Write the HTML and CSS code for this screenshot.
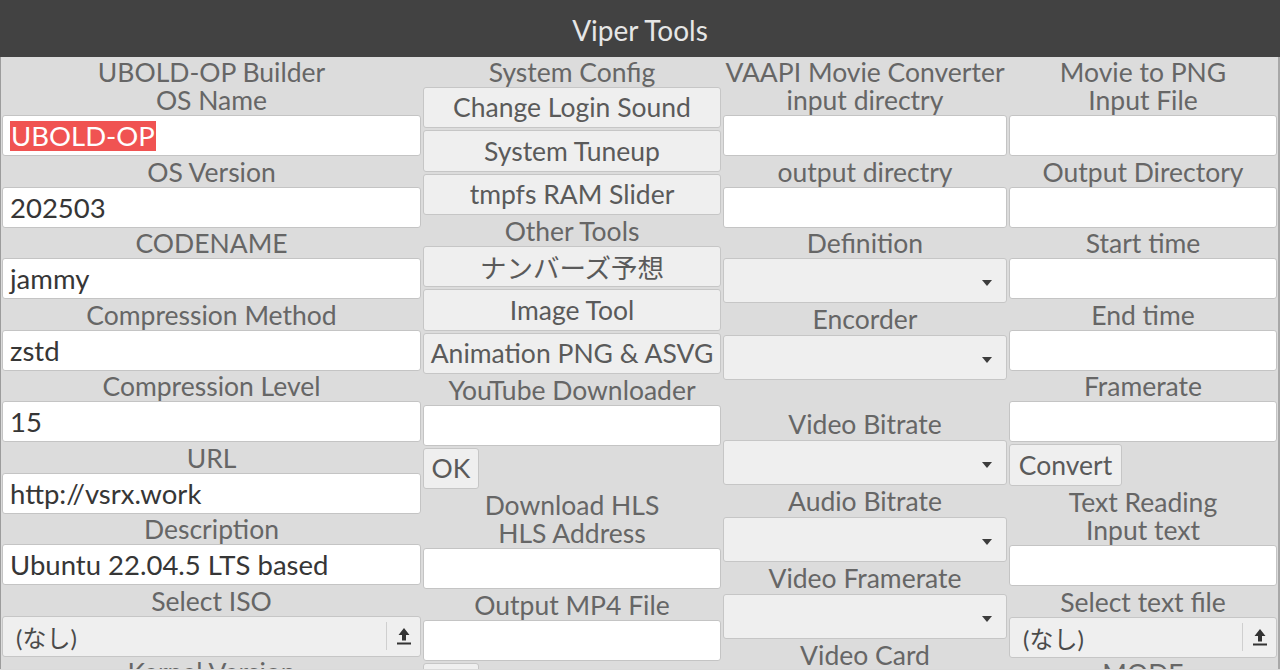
FILE: index.html
```html
<!DOCTYPE html>
<html lang="ja">
<head>
<meta charset="utf-8">
<title>Viper Tools</title>
<link rel="stylesheet" href="styles.css">
</head>
<body>
<div class="window">
  <div class="titlebar">Viper Tools</div>
  <div class="content">
    <div class="col c1">
      <div class="label">UBOLD-OP Builder</div>
      <div class="label">OS Name</div>
      <div class="entry"><span class="sel">UBOLD-OP</span></div>
      <div class="label">OS Version</div>
      <div class="entry">202503</div>
      <div class="label">CODENAME</div>
      <div class="entry">jammy</div>
      <div class="label">Compression Method</div>
      <div class="entry">zstd</div>
      <div class="label">Compression Level</div>
      <div class="entry">15</div>
      <div class="label">URL</div>
      <div class="entry">http://vsrx.work</div>
      <div class="label">Description</div>
      <div class="entry">Ubuntu 22.04.5 LTS based</div>
      <div class="label">Select ISO</div>
      <div class="file">
        <span class="file-name">(なし)</span>
        <span class="file-icon"><svg width="14" height="18" viewBox="0 0 14 18"><path d="M7 1 L12.5 8 H9 V13.5 H5 V8 H1.5 Z" fill="#333"/><rect x="0" y="15.5" width="14" height="2" fill="#333"/></svg></span>
      </div>
      <div class="label">Kernel Version</div>
    </div>
    <div class="col c2">
      <div class="label">System Config</div>
      <div class="btn">Change Login Sound</div>
      <div class="btn">System Tuneup</div>
      <div class="btn">tmpfs RAM Slider</div>
      <div class="label">Other Tools</div>
      <div class="btn">ナンバーズ予想</div>
      <div class="btn">Image Tool</div>
      <div class="btn">Animation PNG &amp; ASVG</div>
      <div class="label">YouTube Downloader</div>
      <div class="entry"></div>
      <div class="btn small">OK</div>
      <div class="label">Download HLS</div>
      <div class="label">HLS Address</div>
      <div class="entry"></div>
      <div class="label">Output MP4 File</div>
      <div class="entry"></div>
      <div class="btn small"></div>
    </div>
    <div class="col c3">
      <div class="label">VAAPI Movie Converter</div>
      <div class="label">input directry</div>
      <div class="entry"></div>
      <div class="label">output directry</div>
      <div class="entry"></div>
      <div class="label">Definition</div>
      <div class="combo"><span class="arrow"></span></div>
      <div class="label tall">Encorder</div>
      <div class="combo"><span class="arrow"></span></div>
      <div class="spacer"></div>
      <div class="label tall">Video Bitrate</div>
      <div class="combo"><span class="arrow"></span></div>
      <div class="label tall">Audio Bitrate</div>
      <div class="combo"><span class="arrow"></span></div>
      <div class="label tall">Video Framerate</div>
      <div class="combo"><span class="arrow"></span></div>
      <div class="label tall">Video Card</div>
      <div class="combo"><span class="arrow"></span></div>
    </div>
    <div class="col c4">
      <div class="label">Movie to PNG</div>
      <div class="label">Input File</div>
      <div class="entry"></div>
      <div class="label">Output Directory</div>
      <div class="entry"></div>
      <div class="label">Start time</div>
      <div class="entry"></div>
      <div class="label">End time</div>
      <div class="entry"></div>
      <div class="label">Framerate</div>
      <div class="entry"></div>
      <div class="btn small convert">Convert</div>
      <div class="label">Text Reading</div>
      <div class="label">Input text</div>
      <div class="entry"></div>
      <div class="label">Select text file</div>
      <div class="file">
        <span class="file-name">(なし)</span>
        <span class="file-icon"><svg width="14" height="18" viewBox="0 0 14 18"><path d="M7 1 L12.5 8 H9 V13.5 H5 V8 H1.5 Z" fill="#333"/><rect x="0" y="15.5" width="14" height="2" fill="#333"/></svg></span>
      </div>
      <div class="label">MODE</div>
    </div>
  </div>
</div>
</body>
</html>
```
FILE: styles.css
```css
* { box-sizing: border-box; }
html, body {
  margin: 0;
  padding: 0;
  width: 1280px;
  height: 670px;
  overflow: hidden;
  background: #dadada;
  font-family: Lato, "Noto Sans CJK JP", "Noto Sans", sans-serif;
}
.window {
  width: 1280px;
  height: 670px;
  overflow: hidden;
  background: #dadada;
}
.titlebar {
  height: 58px;
  background: #424242;
  color: #e6e6e6;
  font-size: 28px;
  line-height: 60px;
  text-align: center;
  border-bottom: 1px solid #6a6a6a;
}
.content {
  display: flex;
  align-items: flex-start;
  height: 612px;
  overflow: hidden;
  border-left: 1px solid #9c9c9c;
  border-right: 2px solid #a8a8a8;
  background: #dcdcdc;
  margin-top: -1px;
}
.col {
  display: flex;
  flex-direction: column;
  flex: none;
}
.c1 { width: 421px; }
.c2 { width: 300px; }
.c3 { width: 286px; }
.c4 { width: 270px; }

.label {
  height: 28.5px;
  line-height: 28.5px;
  padding-top: 0.5px;
  text-align: center;
  color: #666666;
  font-size: 26.5px;
  white-space: nowrap;
}
.label.tall {
  height: 30px;
  line-height: 30px;
  padding-top: 0;
}
.spacer { height: 28px; }

.entry {
  height: 41px;
  margin: 1px;
  background: #ffffff;
  border: 1px solid #c4c4c4;
  border-radius: 3px;
  padding: 0 7px;
  display: flex;
  align-items: center;
  font-size: 27.5px;
  color: #363636;
  white-space: nowrap;
}
.sel {
  background: #f05352;
  color: #ffffff;
  padding: 0 1px;
  line-height: 30px;
}

.btn {
  height: 41.5px;
  margin: 1px;
  background: #efefef;
  border: 1px solid #c6c6c6;
  border-radius: 3px;
  display: flex;
  align-items: center;
  justify-content: center;
  font-size: 26.5px;
  color: #5a5a5a;
  white-space: nowrap;
}
.btn.small {
  align-self: flex-start;
  width: 56px;
}
.btn.convert {
  width: 113px;
  height: 42px;
}

.combo {
  height: 45px;
  margin: 1px;
  background: #efefef;
  border: 1px solid #c6c6c6;
  border-radius: 3px;
  display: flex;
  align-items: center;
  justify-content: flex-end;
  padding-right: 14px;
}
.arrow {
  width: 0;
  height: 0;
  border-left: 5px solid transparent;
  border-right: 5px solid transparent;
  border-top: 6px solid #3c3c3c;
  margin-top: 4px;
}

.file {
  height: 41px;
  margin: 1px;
  background: #efefef;
  border: 1px solid #c6c6c6;
  border-radius: 3px;
  display: flex;
  align-items: center;
  font-size: 24px;
  color: #4a4a4a;
}
.file-name {
  flex: 1;
  padding-left: 13px;
  white-space: nowrap;
}
.file-icon {
  width: 34px;
  height: 28px;
  border-left: 1px solid #cfcfcf;
  display: flex;
  align-items: center;
  justify-content: center;
}
.file-icon svg { display: block; }
```
